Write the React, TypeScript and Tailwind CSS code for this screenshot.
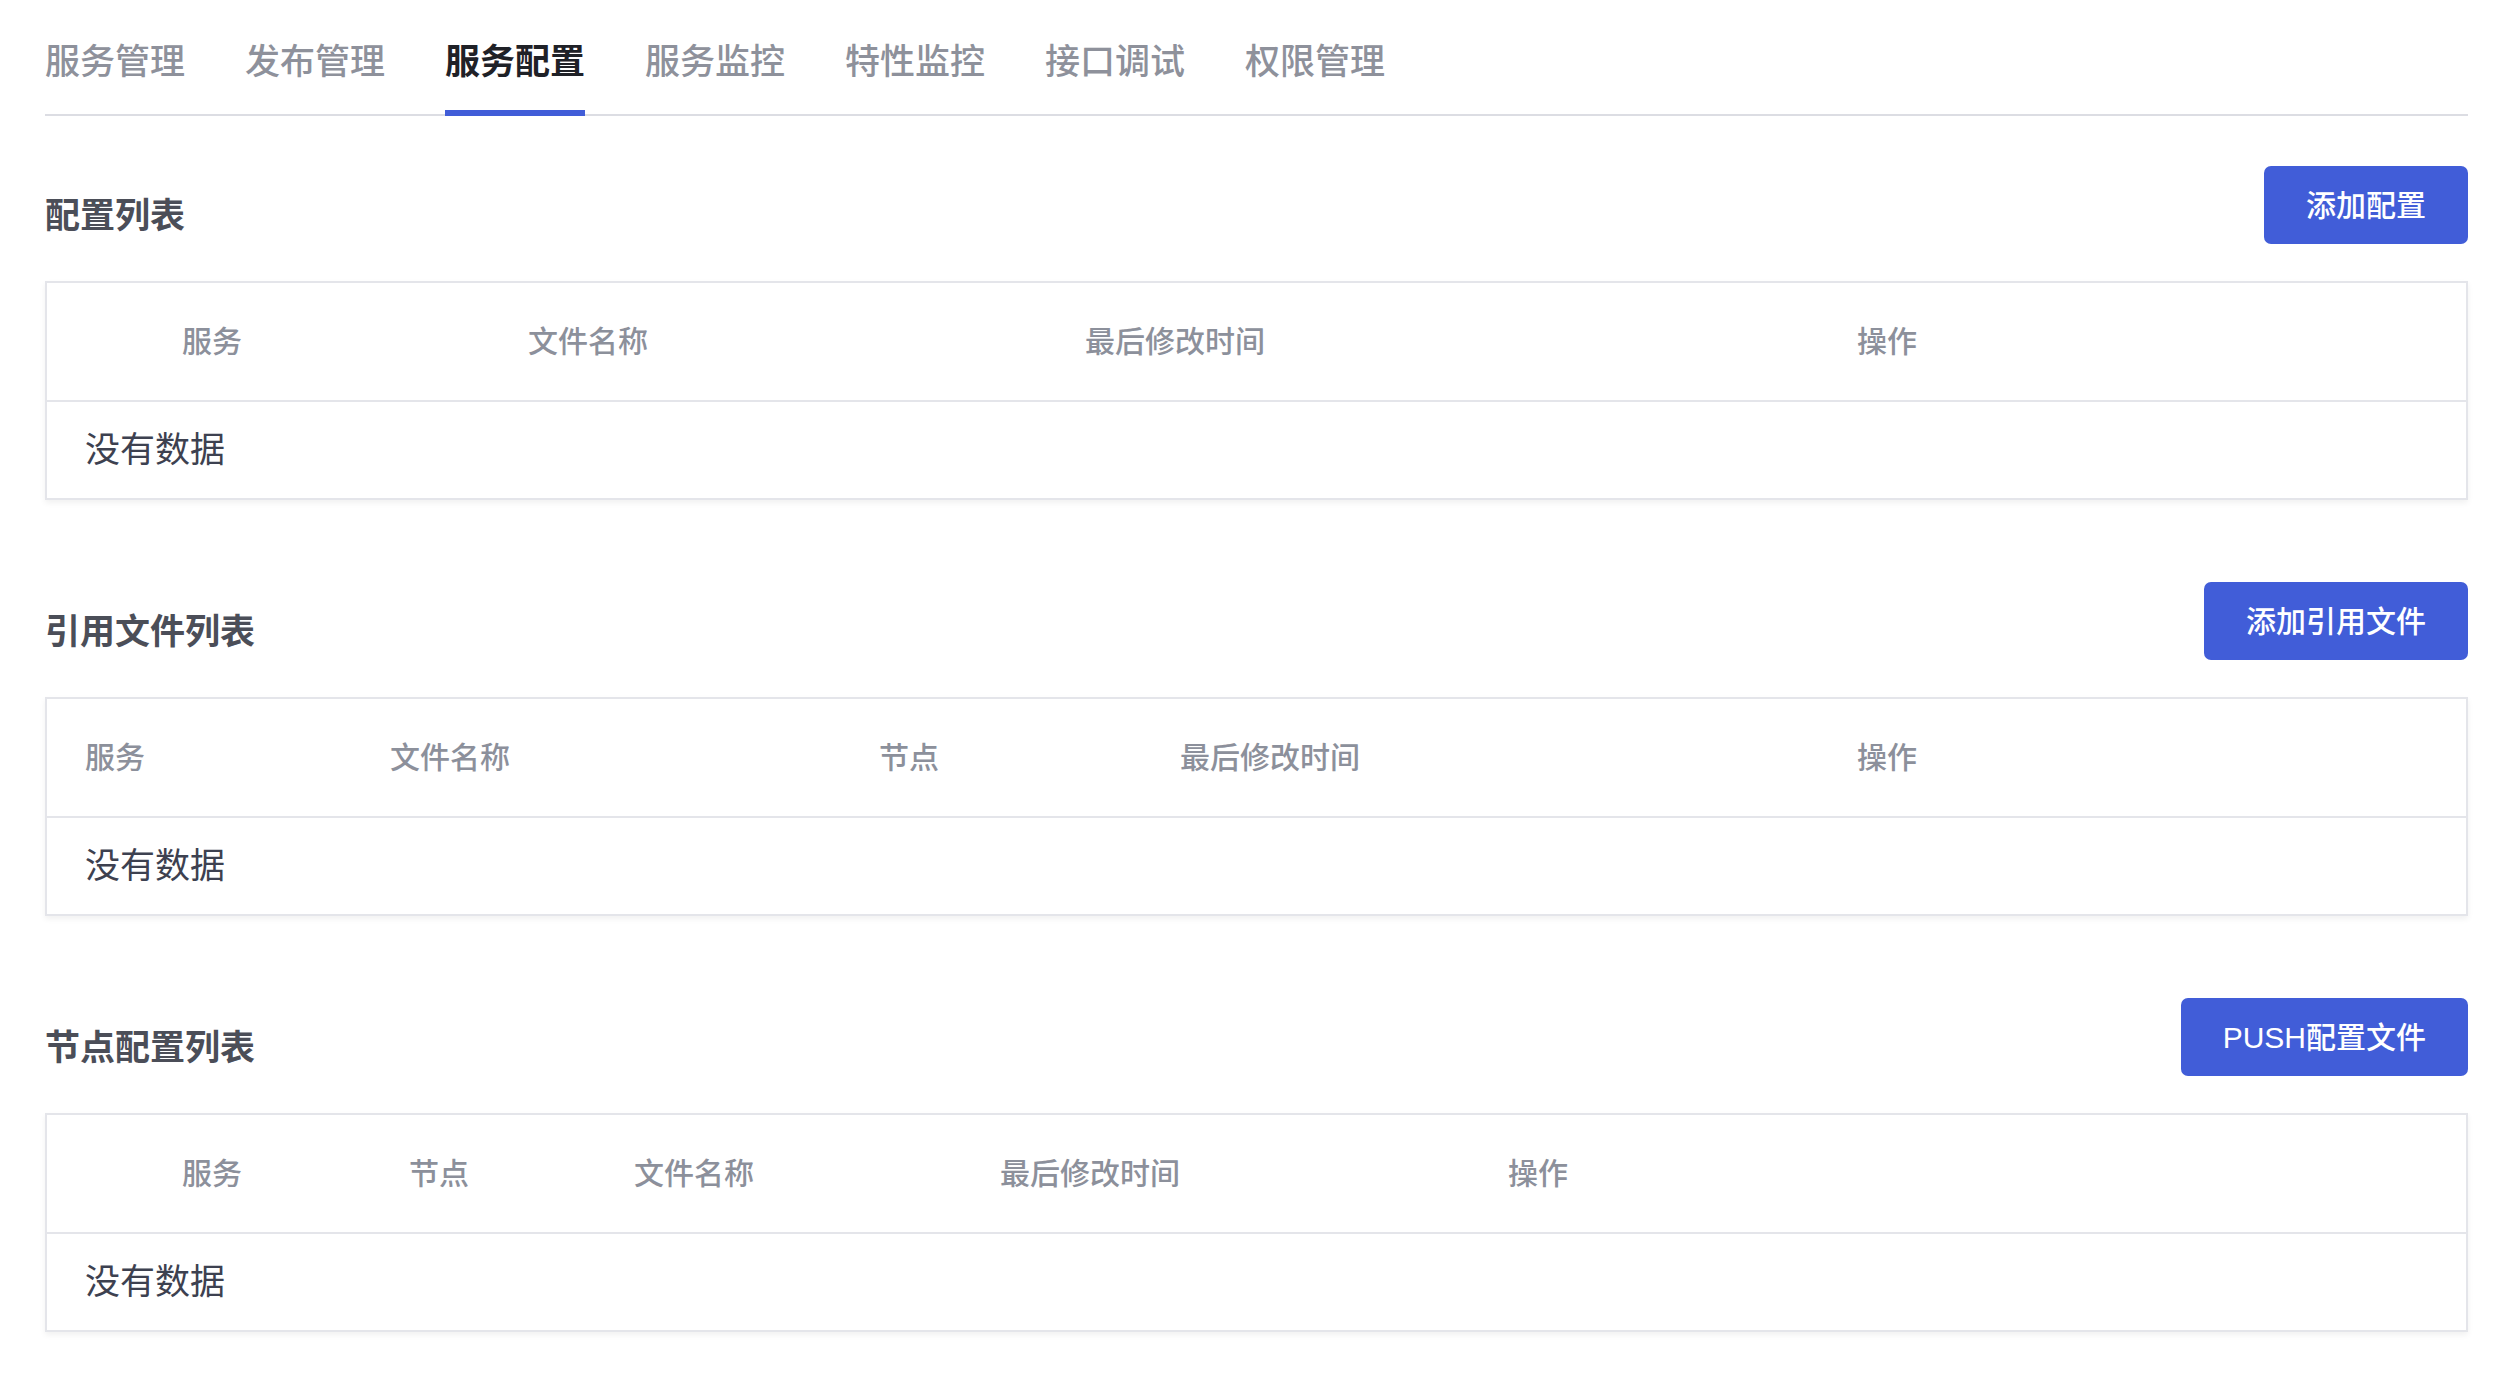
import React from 'react';

const tabs = ['服务管理', '发布管理', '服务配置', '服务监控', '特性监控', '接口调试', '权限管理'];

type Table = {
  title: string;
  action: string;
  cols: string;
  pad: string;
  headers: string[];
};

const tables: Table[] = [
  {
    title: '配置列表',
    action: '添加配置',
    cols: 'grid-cols-[346px_557px_772px_1fr]',
    pad: 'pl-[135px]',
    headers: ['服务', '文件名称', '最后修改时间', '操作'],
  },
  {
    title: '引用文件列表',
    action: '添加引用文件',
    cols: 'grid-cols-[305px_489px_301px_677px_1fr]',
    pad: 'pl-[38px]',
    headers: ['服务', '文件名称', '节点', '最后修改时间', '操作'],
  },
  {
    title: '节点配置列表',
    action: 'PUSH配置文件',
    cols: 'grid-cols-[227px_225px_366px_508px_1fr]',
    pad: 'pl-[135px]',
    headers: ['服务', '节点', '文件名称', '最后修改时间', '操作'],
  },
];

function Section({ t, first }: { t: Table; first: boolean }) {
  return (
    <section className={first ? 'mt-[50px]' : 'mt-[82px]'}>
      <div className="flex items-end justify-between">
        <h2 className="mb-[4px] text-[35px] font-semibold leading-[48px] text-[#4b4e58]">{t.title}</h2>
        <button className="h-[78px] rounded-[7px] bg-[#415dd8] px-[42px] text-[30px] font-medium text-white">
          {t.action}
        </button>
      </div>
      <div className="mt-[37px] border-2 border-[#e4e5ea] bg-white shadow-[0_3px_6px_rgba(0,0,0,0.06)]">
        <div className={`grid h-[119px] items-center border-b-2 border-[#e4e5ea] ${t.cols} ${t.pad}`}>
          {t.headers.map((h) => (
            <div key={h} className="text-[30px] font-medium text-[#8c909b]">
              {h}
            </div>
          ))}
        </div>
        <div className="flex h-[96px] items-center pl-[38px] text-[35px] text-[#3d4150]">没有数据</div>
      </div>
    </section>
  );
}

export default function App() {
  return (
    <div
      className="min-h-screen bg-white pl-[45px] pr-[46px]"
      style={{ fontFamily: '"Liberation Sans", "Noto Sans CJK SC", sans-serif' }}
    >
      <nav className="flex gap-[60px] border-b-2 border-[#dcdde3]">
        {tabs.map((tab) => {
          const active = tab === '服务配置';
          return (
            <div
              key={tab}
              className={`relative w-[140px] pb-[28px] pt-[38px] text-[35px] leading-[48px] ${
                active ? 'font-semibold text-[#1f2127]' : 'font-medium text-[#8e919b]'
              }`}
            >
              {tab}
              {active && <span className="absolute bottom-[-2px] left-0 h-[6px] w-full bg-[#415dd8]" />}
            </div>
          );
        })}
      </nav>
      {tables.map((t, i) => (
        <Section key={t.title} t={t} first={i === 0} />
      ))}
    </div>
  );
}
